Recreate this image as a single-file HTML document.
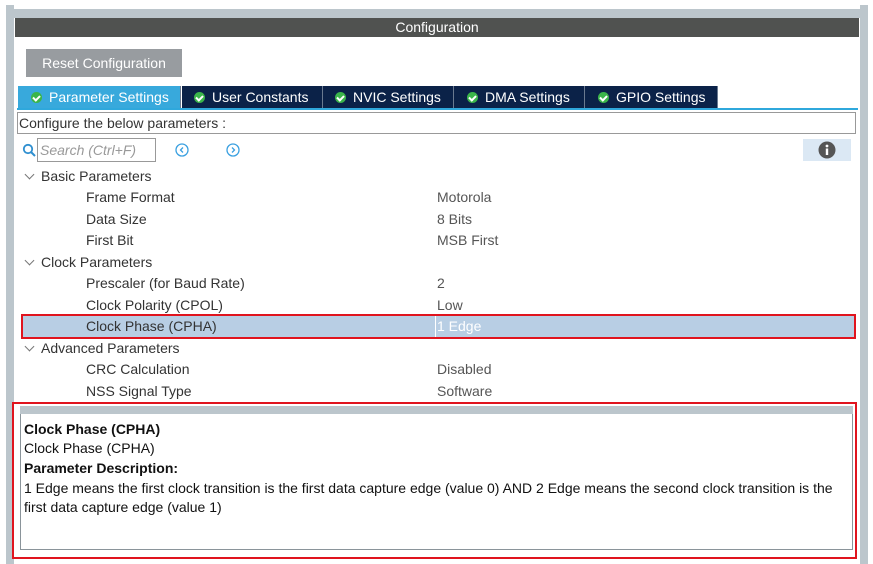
<!DOCTYPE html>
<html><head><style>
*{margin:0;padding:0;box-sizing:border-box}
body{width:873px;height:564px;background:#fff;position:relative;overflow:hidden;font-family:"Liberation Sans",Arial,sans-serif}
.a{position:absolute}
.tab{position:absolute;top:86px;height:22px;background:#0b2248;color:#fff;font-size:14px;line-height:22px;border-right:1px solid #6a7a90;white-space:nowrap}
.tab i{display:inline-block;width:11px;height:11px;border-radius:50%;background:#3bb54a;vertical-align:-1px;margin:0 7px 0 0;position:relative}
.tab i:after{content:"";position:absolute;left:3px;top:2px;width:3px;height:5px;border:solid #fff;border-width:0 2px 2px 0;transform:rotate(45deg)}
.row{position:absolute;left:0;height:21px;font-size:14px;line-height:21px;color:#333;white-space:nowrap}
.l{position:absolute;left:86px}
.v{position:absolute;left:437px;color:#555}
.g{position:absolute;left:41px}
.chev{position:absolute;left:26px;top:5px;width:7px;height:7px;border:solid #777;border-width:0 1px 1px 0;transform:rotate(45deg)}
.d{position:absolute;left:24px;font-size:14px;color:#111;white-space:nowrap;transform-origin:left}
</style></head><body>
<div class="a" style="left:6px;top:5px;width:8px;height:559px;background:#bcc6cc"></div>
<div class="a" style="left:860px;top:5px;width:8px;height:559px;background:#bcc6cc"></div>
<div class="a" style="left:14px;top:9px;width:846px;height:9px;background:#bcc6cc"></div>
<div class="a" style="left:15px;top:18px;width:844px;height:19px;background:#505250;color:#fff;font-size:14px;line-height:19px;text-align:center">Configuration</div>
<div class="a" style="left:26px;top:49px;width:156px;height:28px;background:#989ca0;color:#fff;font-size:14px;line-height:28px;text-align:center">Reset Configuration</div>
<div class="tab" style="left:18px;width:163px;background:#38a9dc;padding-left:13px"><i></i>Parameter Settings</div>
<div class="tab" style="left:182px;width:141px;padding-left:12px"><i></i>User Constants</div>
<div class="tab" style="left:323px;width:131px;padding-left:12px"><i></i>NVIC Settings</div>
<div class="tab" style="left:454px;width:131px;padding-left:13px"><i></i>DMA Settings</div>
<div class="tab" style="left:585px;width:133px;padding-left:13px"><i></i>GPIO Settings</div>
<div class="a" style="left:17px;top:108px;width:841px;height:2px;background:#2fa8dc"></div>
<div class="a" style="left:17px;top:112px;width:839px;height:22px;border:1px solid #999;font-size:14px;line-height:20px;color:#333;padding-left:1px">Configure the below parameters :</div>
<svg class="a" style="left:22px;top:143px" width="14" height="14"><circle cx="6" cy="6" r="4.2" fill="none" stroke="#2f8fd0" stroke-width="1.8"/><path d="M9 9 L13 13" stroke="#2f8fd0" stroke-width="2"/></svg>
<div class="a" style="left:37px;top:138px;width:119px;height:24px;border:1px solid #999;font-size:14px;font-style:italic;color:#999;line-height:22px;padding-left:2px">Search (Ctrl+F)</div>
<svg class="a" style="left:175px;top:143px" width="14" height="14"><circle cx="7" cy="7" r="6" fill="none" stroke="#3aa0e0" stroke-width="1.3"/><path d="M8 4.5 L5.5 7 L8 9.5" fill="none" stroke="#3aa0e0" stroke-width="1.3"/></svg>
<svg class="a" style="left:226px;top:143px" width="14" height="14"><circle cx="7" cy="7" r="6" fill="none" stroke="#3aa0e0" stroke-width="1.3"/><path d="M6 4.5 L8.5 7 L6 9.5" fill="none" stroke="#3aa0e0" stroke-width="1.3"/></svg>
<div class="a" style="left:803px;top:139px;width:48px;height:22px;background:#dbe8f4"></div>
<svg class="a" style="left:818px;top:141px" width="18" height="18"><circle cx="9" cy="9" r="8.5" fill="#555"/><circle cx="9" cy="5" r="1.4" fill="#fff"/><rect x="7.8" y="7.5" width="2.4" height="6.5" fill="#fff"/></svg>
<div class="row" style="top:166px"><span class="chev"></span><span class="g">Basic Parameters</span></div>
<div class="row" style="top:187px"><span class="l">Frame Format</span><span class="v">Motorola</span></div>
<div class="row" style="top:209px"><span class="l">Data Size</span><span class="v">8 Bits</span></div>
<div class="row" style="top:230px"><span class="l">First Bit</span><span class="v">MSB First</span></div>
<div class="row" style="top:252px"><span class="chev"></span><span class="g">Clock Parameters</span></div>
<div class="row" style="top:273px"><span class="l">Prescaler (for Baud Rate)</span><span class="v">2</span></div>
<div class="row" style="top:295px"><span class="l">Clock Polarity (CPOL)</span><span class="v">Low</span></div>
<div class="a" style="left:21px;top:314px;width:835px;height:25px;border:2px solid #e0141e;background:#b8cee4"></div>
<div class="a" style="left:435px;top:316px;width:1px;height:21px;background:#fff"></div>
<div class="row" style="top:316px"><span class="l">Clock Phase (CPHA)</span><span class="v" style="color:#fff">1 Edge</span></div>
<div class="row" style="top:338px"><span class="chev"></span><span class="g">Advanced Parameters</span></div>
<div class="row" style="top:359px"><span class="l">CRC Calculation</span><span class="v">Disabled</span></div>
<div class="row" style="top:381px"><span class="l">NSS Signal Type</span><span class="v">Software</span></div>
<div class="a" style="left:12px;top:402px;width:845px;height:157px;border:2px solid #e0141e"></div>
<div class="a" style="left:20px;top:406px;width:833px;height:8px;background:#bcc6cc"></div>
<div class="a" style="left:20px;top:414px;width:833px;height:136px;border:1px solid #8a949a;border-top:none"></div>
<div class="d" style="top:421px;font-weight:bold">Clock Phase (CPHA)</div>
<div class="d" style="top:440px">Clock Phase (CPHA)</div>
<div class="d" style="top:460px;font-weight:bold">Parameter Description:</div>
<div class="d" style="top:480px">1 Edge means the first clock transition is the first data capture edge (value 0) AND 2 Edge means the second clock transition is the</div>
<div class="d" style="top:499px">first data capture edge (value 1)</div>
</body></html>
